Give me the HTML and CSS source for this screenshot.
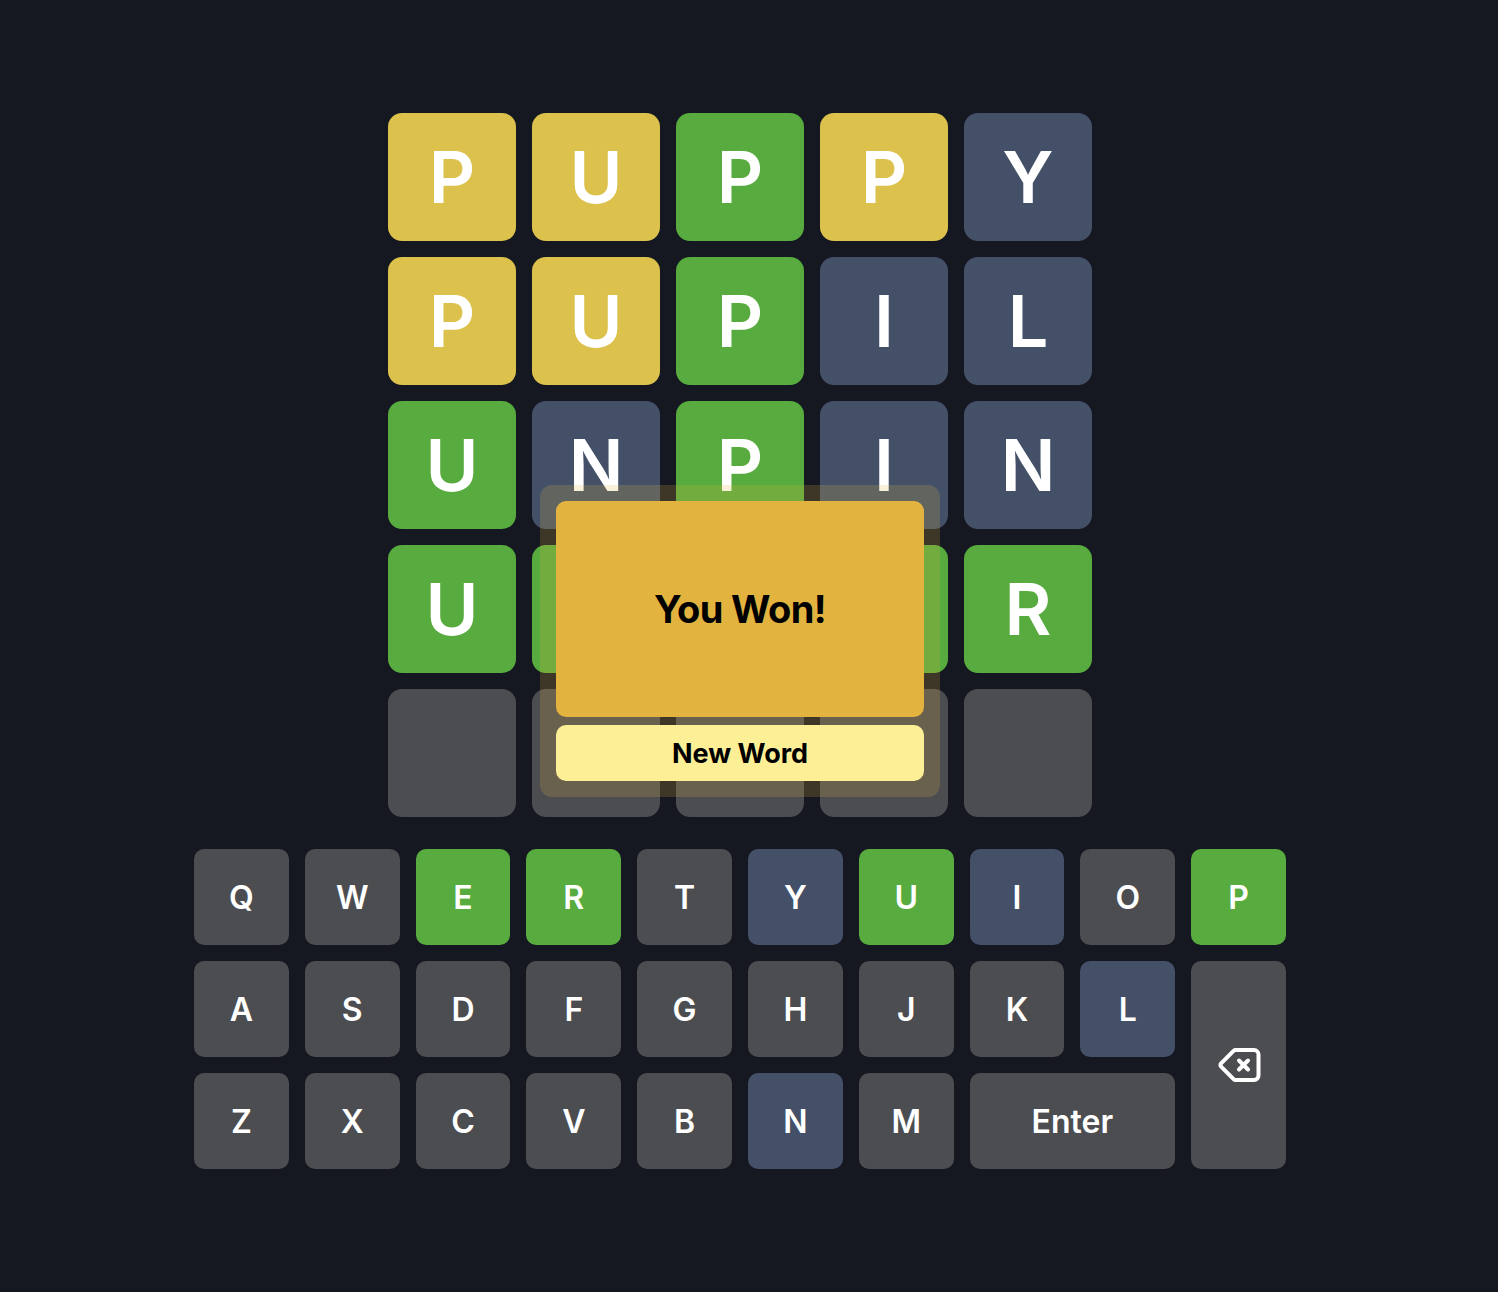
FILE: index.html
```html
<!DOCTYPE html>
<html lang="en">
<head>
<meta charset="utf-8">
<title>Wordle</title>
<link rel="stylesheet" href="styles.css">
</head>
<body>
<main class="game">
  <div class="board">
    <div class="tile present">P</div>
    <div class="tile present">U</div>
    <div class="tile correct">P</div>
    <div class="tile present">P</div>
    <div class="tile absent">Y</div>

    <div class="tile present">P</div>
    <div class="tile present">U</div>
    <div class="tile correct">P</div>
    <div class="tile absent">I</div>
    <div class="tile absent">L</div>

    <div class="tile correct">U</div>
    <div class="tile absent">N</div>
    <div class="tile correct">P</div>
    <div class="tile absent">I</div>
    <div class="tile absent">N</div>

    <div class="tile correct">U</div>
    <div class="tile correct"></div>
    <div class="tile correct"></div>
    <div class="tile correct"></div>
    <div class="tile correct">R</div>

    <div class="tile empty"></div>
    <div class="tile empty"></div>
    <div class="tile empty"></div>
    <div class="tile empty"></div>
    <div class="tile empty"></div>

    <div class="modal">
      <div class="modal-card">You Won!</div>
      <button class="modal-button">New Word</button>
    </div>
  </div>

  <div class="keyboard">
    <div class="key">Q</div>
    <div class="key">W</div>
    <div class="key correct">E</div>
    <div class="key correct">R</div>
    <div class="key">T</div>
    <div class="key absent">Y</div>
    <div class="key correct">U</div>
    <div class="key absent">I</div>
    <div class="key">O</div>
    <div class="key correct">P</div>

    <div class="key">A</div>
    <div class="key">S</div>
    <div class="key">D</div>
    <div class="key">F</div>
    <div class="key">G</div>
    <div class="key">H</div>
    <div class="key">J</div>
    <div class="key">K</div>
    <div class="key absent">L</div>
    <div class="key backspace">
      <svg class="backspace-icon" viewBox="0 0 24 24" fill="none" stroke="currentColor" stroke-width="2" stroke-linecap="round" stroke-linejoin="round">
        <path d="M12 9.75 14.25 12m0 0 2.25 2.25M14.25 12l2.25-2.25M14.25 12 12 14.25m-2.58 4.92-6.374-6.375a1.125 1.125 0 0 1 0-1.590L9.42 4.83c.21-.211.497-.33.795-.33H19.5a2.250 2.250 0 0 1 2.25 2.25v10.5a2.25 2.25 0 0 1-2.25 2.25h-9.284c-.298 0-.585-.119-.795-.33Z"/>
      </svg>
    </div>

    <div class="key">Z</div>
    <div class="key">X</div>
    <div class="key">C</div>
    <div class="key">V</div>
    <div class="key">B</div>
    <div class="key absent">N</div>
    <div class="key">M</div>
    <div class="key enter">Enter</div>
  </div>
</main>
</body>
</html>
```

FILE: styles.css
```css
html, body {
  margin: 0;
  padding: 0;
  background: #161821;
}

body {
  font-family: Inter, "Liberation Sans", sans-serif;
  color: #ffffff;
}

.game {
  width: 1480px;
  padding-top: 113px;
  display: flex;
  flex-direction: column;
  align-items: center;
  gap: 32px;
}

.board {
  position: relative;
  display: grid;
  grid-template-columns: repeat(5, 128px);
  grid-auto-rows: 128px;
  gap: 16px;
}

.tile {
  border-radius: 14px;
  display: flex;
  align-items: center;
  justify-content: center;
  font-size: 72px;
  font-weight: 600;
  line-height: 1;
  color: #ffffff;
  background: #4c4d51;
}

.tile.present { background: #dcc24c; }
.tile.correct { background: #58ab3e; }
.tile.absent  { background: #435068; }
.tile.empty   { background: #4c4d51; }

.modal {
  position: absolute;
  left: 152px;
  top: 372px;
  width: 368px;
  padding: 16px;
  border-radius: 12px;
  background: rgba(226, 180, 63, 0.2);
  display: flex;
  flex-direction: column;
  gap: 8px;
}

.modal-card {
  height: 216px;
  border-radius: 10px;
  background: #e2b43f;
  color: #000000;
  display: flex;
  align-items: center;
  justify-content: center;
  font-size: 38px;
  font-weight: 700;
  letter-spacing: -0.6px;
}

.modal-button {
  height: 56px;
  border: none;
  border-radius: 10px;
  background: #fdef96;
  color: #000000;
  font-family: Inter, "Liberation Sans", sans-serif;
  font-size: 27px;
  font-weight: 700;
  padding: 0;
}

.keyboard {
  width: 1092px;
  display: grid;
  grid-template-columns: repeat(10, 1fr);
  grid-template-rows: repeat(3, 96px);
  gap: 16px;
}

.key {
  border-radius: 10px;
  background: #4c4d51;
  color: #ffffff;
  display: flex;
  align-items: center;
  justify-content: center;
  font-size: 32px;
  font-weight: 600;
}

.key.correct { background: #58ab3e; }
.key.absent  { background: #435068; }

.key.backspace {
  grid-column: 10;
  grid-row: 2 / span 2;
}

.key.enter {
  grid-column: 8 / span 2;
}

.backspace-icon {
  width: 48px;
  height: 48px;
}
```
